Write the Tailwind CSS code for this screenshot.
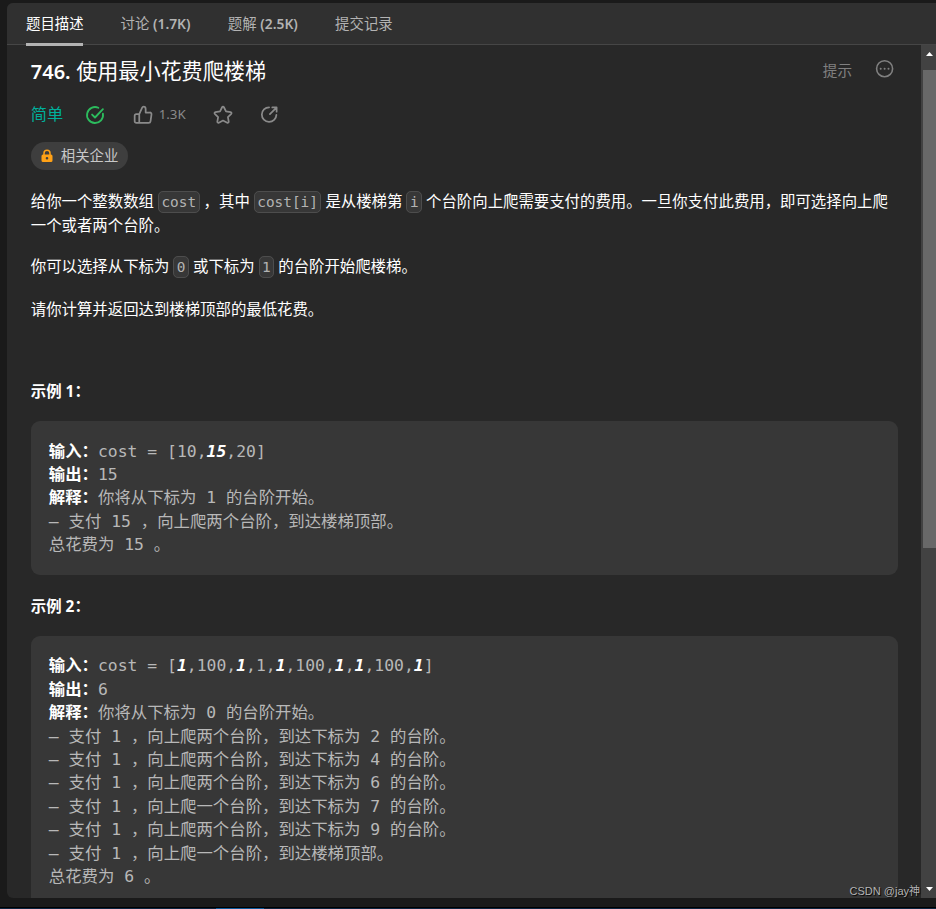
<!DOCTYPE html>
<html lang="zh-CN">
<head>
  <meta charset="UTF-8">
  <meta name="viewport" content="width=device-width, initial-scale=1.0">
  <title>746. 使用最小花费爬楼梯</title>
  <script src="https://cdn.jsdelivr.net/npm/@tailwindcss/browser@4"></script>
</head>
<body class="bg-[#1a1a1a] h-[909px] overflow-hidden flex flex-col font-['Noto_Sans','Noto_Sans_CJK_SC',sans-serif]">
  <div class="relative mt-[3px] ml-[7px] h-[895px] shrink-0 flex flex-col bg-[#282828] rounded-tl-md rounded-bl-md overflow-hidden">
    <!-- tabs -->
    <nav class="h-[42px] shrink-0 flex gap-[37.5px] pl-[19px] bg-[#303030] border-b border-[#464646] text-[14.4px] leading-[42px] text-[#b3b3b3] whitespace-nowrap">
      <a class="relative h-[43px] w-[57px] text-white">题目描述<span class="absolute left-0 bottom-0 h-[3px] w-full bg-[#b3b3b3]"></span></a>
      <a class="w-[69.8px]">讨论 <span class="font-semibold text-[13.8px]">(1.7K)</span></a>
      <a class="w-[69.8px]">题解 <span class="font-semibold text-[13.8px]">(2.5K)</span></a>
      <a>提交记录</a>
    </nav>

    <div class="flex flex-1 min-h-0">
      <main class="flex-1 min-w-0 overflow-hidden pl-[23.8px] pr-[23px]">
        <div class="flex h-[53px] justify-between">
          <h1 class="text-[21.1px] leading-[52px] text-white whitespace-nowrap"><span class="font-semibold text-[20px]">746.</span> 使用最小花费爬楼梯</h1>
          <div class="flex items-center gap-[23px] h-[52px] mr-[3px] text-[#808080]">
            <span class="text-[14.6px]">提示</span>
            <svg class="size-5 -mt-[5px]" viewBox="0 0 20 20" fill="none" stroke="currentColor" stroke-width="1.6">
              <circle cx="9.6" cy="9.7" r="8"/>
              <g fill="currentColor" stroke="none"><circle cx="5.7" cy="9.7" r="1"/><circle cx="9.6" cy="9.7" r="1"/><circle cx="13.5" cy="9.7" r="1"/></g>
            </svg>
          </div>
        </div>

        <div class="flex items-center h-8 pt-px text-[#8a8a8a]">
          <span class="text-[16.2px] w-[54.7px] text-[#00af9b]">简单</span>
          <svg class="size-5" viewBox="0 0 24 24" fill="none" stroke="#2cbb5d" stroke-width="2.2" stroke-linecap="round" stroke-linejoin="round">
            <path d="M21.5 10.5A9.6 9.6 0 1 1 16 3.3"/><path d="M8.5 11.5l3.5 3.5L21.5 5"/>
          </svg>
          <svg class="size-5 ml-7" viewBox="0 0 24 24" fill="none" stroke="currentColor" stroke-width="2.1" stroke-linejoin="round">
            <path d="M7.5 21.5H4a2 2 0 0 1-2-2V13a2 2 0 0 1 2-2h3.5zM7.5 11L11 3.2c.3-.7.8-1.2 1.6-1.2 1.5 0 2.6 1.2 2.6 2.7V9h5a2 2 0 0 1 2 2.3l-1.2 8.3a2.2 2.2 0 0 1-2.2 1.900H7.500"/>
          </svg>
          <span class="ml-[5.2px] w-[54.3px] text-[13.3px]">1.3K</span>
          <svg class="size-5" viewBox="0 0 24 24" fill="none" stroke="currentColor" stroke-width="2.1" stroke-linejoin="round">
            <path d="M10.9 2.7a1.25 1.25 0 0 1 2.2 0l2.5 5 5.6.8a1.25 1.25 0 0 1 .7 2.1l-4 3.9.95 5.5a1.25 1.25 0 0 1-1.8 1.3L12 18.7l-5 2.6a1.25 1.25 0 0 1-1.8-1.3l.95-5.5-4-3.9a1.25 1.25 0 0 1 .7-2.1l5.6-.8z"/>
          </svg>
          <svg class="size-[19px] ml-[27px]" viewBox="0 0 24 24" fill="none" stroke="currentColor" stroke-width="2.2" stroke-linecap="round" stroke-linejoin="round">
            <path d="M11.5 3a9.2 9.2 0 1 0 9.2 9.5M15.5 3h5.5v5.5M20.5 3.5l-8 8"/>
          </svg>
        </div>

        <div class="flex items-center mt-3 h-7 w-[97px] pl-[9px] rounded-full bg-[#3e3e3e] text-[14.4px] text-[#c8c8c8] whitespace-nowrap">
          <svg class="w-[14px] h-[14px] mr-[7px]" viewBox="0 0 14 14">
            <path d="M4 6V4.2a3 3 0 0 1 6 0V6" fill="none" stroke="#ffa116" stroke-width="1.5"/>
            <path fill="#ffa116" fill-rule="evenodd" d="M3 5.5h8a1.5 1.5 0 0 1 1.5 1.5v4.5A1.5 1.5 0 0 1 11 13H3a1.5 1.5 0 0 1-1.5-1.5V7A1.5 1.5 0 0 1 3 5.5zM7 8a1.3 1.3 0 1 0 0 2.6A1.3 1.3 0 0 0 7 8z"/>
          </svg>相关企业
        </div>

        <section class="mt-[20px] flex flex-col gap-[18.3px] text-[15.4px] leading-[23px] text-white whitespace-nowrap">
          <p>给你一个整数数组 <code class="rounded-[5px] border border-[#4d4d4d] bg-[#373737] px-[2.5px] py-[2px] text-[14.4px] text-[#b3b3b3] font-['DejaVu_Sans_Mono',monospace]">cost</code> ，其中 <code class="rounded-[5px] border border-[#4d4d4d] bg-[#373737] px-[2.5px] py-[2px] text-[14.4px] text-[#b3b3b3] font-['DejaVu_Sans_Mono',monospace]">cost[i]</code> 是从楼梯第 <code class="rounded-[5px] border border-[#4d4d4d] bg-[#373737] px-[2.5px] py-[2px] text-[14.4px] text-[#b3b3b3] font-['DejaVu_Sans_Mono',monospace]">i</code> 个台阶向上爬需要支付的费用。一旦你支付此费用，即可选择向上爬<br>一个或者两个台阶。</p>
          <p>你可以选择从下标为 <code class="rounded-[5px] border border-[#4d4d4d] bg-[#373737] px-[2.5px] py-[2px] text-[14.4px] text-[#b3b3b3] font-['DejaVu_Sans_Mono',monospace]">0</code> 或下标为 <code class="rounded-[5px] border border-[#4d4d4d] bg-[#373737] px-[2.5px] py-[2px] text-[14.4px] text-[#b3b3b3] font-['DejaVu_Sans_Mono',monospace]">1</code> 的台阶开始爬楼梯。</p>
          <p>请你计算并返回达到楼梯顶部的最低花费。</p>
        </section>

        <p class="mt-[59.5px] text-[15.4px] leading-[23px] font-bold text-white">示例 1：</p>
        <pre class="mt-[18px] h-[153.5px] rounded-[9px] bg-[#373737] p-[18px] pt-[18.5px] text-[16.4px] leading-[23.4px] text-[#b8b8b8] font-['DejaVu_Sans_Mono','Noto_Sans_CJK_SC',monospace]"><b class="text-white">输入：</b>cost = [10,<b class="italic text-white">15</b>,20]
<b class="text-white">输出：</b>15
<b class="text-white">解释：</b>你将从下标为 1 的台阶开始。
– 支付 15 ，向上爬两个台阶，到达楼梯顶部。
总花费为 15 。</pre>

        <p class="mt-[20px] text-[15.4px] leading-[23px] font-bold text-white">示例 2：</p>
        <pre class="mt-[18.4px] h-[290px] rounded-[9px] bg-[#373737] p-[18px] pt-[18.3px] text-[16.4px] leading-[23.4px] text-[#b8b8b8] font-['DejaVu_Sans_Mono','Noto_Sans_CJK_SC',monospace]"><b class="text-white">输入：</b>cost = [<b class="italic text-white">1</b>,100,<b class="italic text-white">1</b>,1,<b class="italic text-white">1</b>,100,<b class="italic text-white">1</b>,<b class="italic text-white">1</b>,100,<b class="italic text-white">1</b>]
<b class="text-white">输出：</b>6
<b class="text-white">解释：</b>你将从下标为 0 的台阶开始。
– 支付 1 ，向上爬两个台阶，到达下标为 2 的台阶。
– 支付 1 ，向上爬两个台阶，到达下标为 4 的台阶。
– 支付 1 ，向上爬两个台阶，到达下标为 6 的台阶。
– 支付 1 ，向上爬一个台阶，到达下标为 7 的台阶。
– 支付 1 ，向上爬两个台阶，到达下标为 9 的台阶。
– 支付 1 ，向上爬一个台阶，到达楼梯顶部。
总花费为 6 。</pre>
      </main>

      <!-- scrollbar -->
      <div class="w-[15px] shrink-0 flex flex-col items-end bg-[#424242]">
        <svg class="w-[15px] h-[25px] shrink-0" viewBox="0 0 15 25"><path d="M5 11h7L8.5 7z" fill="#fff"/></svg>
        <div class="w-[13px] h-[478px] bg-[#686868]"></div>
        <svg class="w-[15px] h-[17px] mt-auto shrink-0" viewBox="0 0 15 17"><path d="M5 6h7L8.5 10z" fill="#fff"/></svg>
      </div>
    </div>
    <span class="absolute right-4 bottom-0 text-[11px] leading-[13px] text-[#b4b4b4] whitespace-nowrap font-['Liberation_Sans','Noto_Sans_CJK_SC',sans-serif] [text-shadow:1px_1px_1px_#000]">CSDN @jay神</span>
  </div>
  <div class="mt-auto h-[2px] shrink-0 bg-[#0c2440] border-t border-black pl-[216px]">
    <div class="h-px w-12 bg-[#0a5a9c]"></div>
  </div>
</body>
</html>
